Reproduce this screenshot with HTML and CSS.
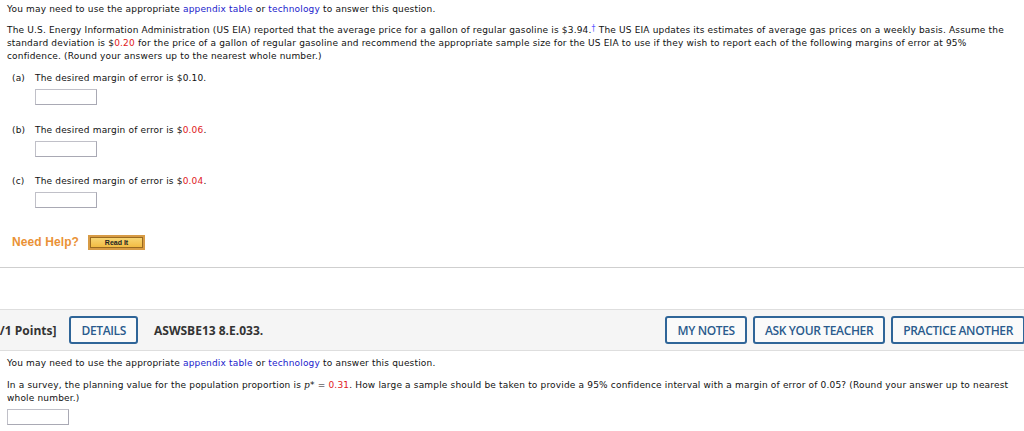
FILE: index.html
```html
<!DOCTYPE html>
<html>
<head>
<meta charset="utf-8">
<link rel="stylesheet" href="styles.css">
</head>
<body>
<div class="question">
  <p class="note">You may need to use the appropriate <a class="link">appendix table</a> or <a class="link">technology</a> to answer this question.</p>
  <p class="stem">The U.S. Energy Information Administration (US EIA) reported that the average price for a gallon of regular gasoline is $3.94.<span class="dagger">†</span> The US EIA updates its estimates of average gas prices on a weekly basis. Assume the standard deviation is $<span class="red">0.20</span> for the price of a gallon of regular gasoline and recommend the appropriate sample size for the US EIA to use if they wish to report each of the following margins of error at 95% confidence. (Round your answers up to the nearest whole number.)</p>
  <div class="part">
    <div class="part-row"><span class="label">(a)</span><span>The desired margin of error is $0.10.</span></div>
    <div class="answer"><span class="box"></span></div>
  </div>
  <div class="part">
    <div class="part-row"><span class="label">(b)</span><span>The desired margin of error is $<span class="red">0.06</span>.</span></div>
    <div class="answer"><span class="box"></span></div>
  </div>
  <div class="part">
    <div class="part-row"><span class="label">(c)</span><span>The desired margin of error is $<span class="red">0.04</span>.</span></div>
    <div class="answer"><span class="box"></span></div>
  </div>
  <div class="help">
    <span class="need">Need Help?</span>
    <span class="readit">Read It</span>
  </div>
</div>
<hr class="divider">
<div class="qheader">
  <span class="points">-/1 Points]</span>
  <span class="btn">DETAILS</span>
  <span class="qid">ASWSBE13 8.E.033.</span>
  <span class="spacer"></span>
  <span class="btn">MY NOTES</span>
  <span class="btn">ASK YOUR TEACHER</span>
  <span class="btn">PRACTICE ANOTHER</span>
</div>
<div class="question q2">
  <p class="note">You may need to use the appropriate <a class="link">appendix table</a> or <a class="link">technology</a> to answer this question.</p>
  <p class="stem">In a survey, the planning value for the population proportion is <i class="pv">p</i>* = <span class="red">0.31</span>. How large a sample should be taken to provide a 95% confidence interval with a margin of error of 0.05? (Round your answer up to nearest whole number.)</p>
  <div class="answer2"><span class="box"></span></div>
</div>
</body>
</html>
```

FILE: styles.css
```css
html, body {
  margin: 0;
  padding: 0;
  background: #fff;
}
body {
  font-family: "DejaVu Sans", Verdana, sans-serif;
  font-size: 9px;
  line-height: 13px;
  letter-spacing: 0.17px;
  color: #111;
  overflow: hidden;
}
.question {
  padding: 0 7px;
}
.note {
  margin: 0;
  padding-top: 3px;
}
.stem {
  margin: 8px 0 0 0;
}
.link {
  color: #1a1acc;
  text-decoration: none;
}
.red {
  color: #e0201c;
}
.dagger {
  color: #5a5aff;
  font-size: 8px;
  line-height: 0;
  vertical-align: 2px;
}
.part {
  margin-top: 9px;
}
.part + .part {
  margin-top: 18.5px;
}
.part-row {
  display: flex;
  padding-left: 5px;
}
.label {
  width: 23px;
}
.answer {
  padding: 4px 0 0 28px;
  height: 16px;
}
.box {
  display: block;
  width: 60px;
  height: 14px;
  border: 1px solid #a9a9b4;
  border-top-color: #c0c0c8;
  border-left-color: #c0c0c8;
  background: #fff;
}
.help {
  display: flex;
  align-items: center;
  gap: 9px;
  margin-top: 27px;
  padding-left: 5px;
}
.need {
  font-family: "Liberation Sans", Arial, sans-serif;
  font-weight: bold;
  font-size: 12px;
  letter-spacing: 0.1px;
  color: #ea9236;
}
.readit {
  display: inline-block;
  width: 53px;
  height: 11px;
  border: 2px solid #d79b45;
  box-shadow: inset 0 0 0 1px #9a6a20;
  background: linear-gradient(#f8d878, #f1b93e);
  font-family: "Liberation Sans", Arial, sans-serif;
  font-weight: bold;
  font-size: 7px;
  line-height: 11px;
  letter-spacing: 0;
  text-align: center;
  color: #222;
}
.divider {
  border: 0;
  border-top: 1px solid #cfcfcf;
  margin: 17px 0 0 0;
  height: 0;
}
.qheader {
  margin-top: 41px;
  height: 40px;
  background: #f5f5f5;
  border-top: 1px solid #dedede;
  border-bottom: 1px solid #dedede;
  display: flex;
  align-items: center;
  gap: 6px;
  font-family: "Open Sans", sans-serif;
  font-size: 12px;
  font-weight: 600;
  letter-spacing: 0;
  color: #333;
}
.points {
  margin-left: -4px;
  margin-right: 7px;
  color: #333;
  font-weight: 700;
}
.qid {
  margin-left: 10px;
  font-weight: 700;
  color: #333;
}
.spacer {
  flex: 1;
}
.btn {
  display: inline-flex;
  align-items: center;
  height: 24px;
  padding: 0 10px;
  border: 2px solid #2f6598;
  border-radius: 3px;
  color: #2a5b8d;
  background: #fafafa;
  font-weight: 600;
  letter-spacing: -0.35px;
}
.qheader .btn:last-child {
  margin-right: -1px;
}
.q2 .note {
  padding-top: 6px;
}
.q2 .stem {
  margin-top: 9px;
}
.pv {
  font-family: "DejaVu Serif", serif;
}
.answer2 {
  padding-top: 4px;
}
```
